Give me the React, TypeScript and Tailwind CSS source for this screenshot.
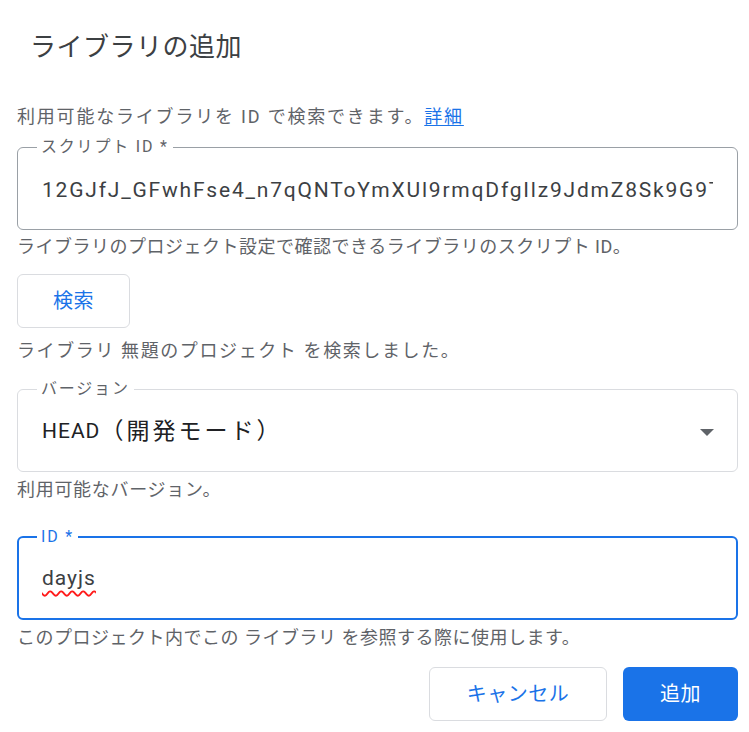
import React from "react";

const font = "font-['Roboto','Noto_Sans_CJK_JP',sans-serif]";

function Field({
  label,
  tone,
  children,
}: {
  label: string;
  tone: "dark" | "light" | "focused";
  children: React.ReactNode;
}) {
  const box =
    tone === "focused"
      ? "border-2 border-[#1a73e8] px-[23px]"
      : tone === "dark"
        ? "border border-[#9aa0a6] px-[24px]"
        : "border border-[#dadce0] px-[24px]";
  return (
    <fieldset className={`rounded-[6px] ${box}`}>
      <legend
        className={
          "ml-[-5px] px-[4px] text-[16px] leading-[18px] tracking-[1.8px] " +
          (tone === "focused" ? "text-[#1a73e8]" : "text-[#5f6368]")
        }
      >
        {label}
      </legend>
      {children}
    </fieldset>
  );
}

export default function App() {
  return (
    <div className={`${font} min-h-[732px] w-[749px] bg-white pl-[17px] pr-[11px] pt-[31px]`}>
      <h1 className="ml-[13px] text-[26px] leading-[32px] tracking-[0.5px] text-[#3c4043]">ライブラリの追加</h1>

      <p className="mt-[42px] text-[18px] leading-[24px] tracking-[1.8px] text-[#5f6368]">
        利用可能なライブラリを ID で検索できます。
        <a href="#" className="text-[#1a73e8] underline underline-offset-2">
          詳細
        </a>
      </p>

      <div className="mt-[9px]">
        <Field label="スクリプト ID *" tone="dark">
          <div className="h-[73px] pt-[14px]">
            <input
              readOnly
              value="12GJfJ_GFwhFse4_n7qQNToYmXUl9rmqDfgIlz9JdmZ8Sk9G9TLM0Rz5sT1d7Wq"
              className="h-[40px] w-full bg-transparent text-[21px] tracking-[1.8px] text-[#3c4043] outline-none"
            />
          </div>
        </Field>
      </div>
      <p className="mt-[5px] text-[18px] leading-[24px] tracking-[0.5px] text-[#5f6368]">
        ライブラリのプロジェクト設定で確認できるライブラリのスクリプト ID。
      </p>

      <button className="mt-[15px] h-[54px] w-[113px] rounded-[6px] border border-[#dadce0] text-[20px] tracking-[0.5px] text-[#1a73e8]">
        検索
      </button>
      <p className="mt-[11px] text-[18px] leading-[24px] tracking-[1.6px] text-[#5f6368]">
        ライブラリ 無題のプロジェクト を検索しました。
      </p>

      <div className="mt-[17px]">
        <Field label="バージョン" tone="light">
          <div className="flex h-[73px] items-start justify-between pt-[14px]">
            <span className="flex h-[40px] items-center text-[21px] tracking-[1px] text-[#202124]">
              HEAD
              <span className="text-[23px] tracking-[3px]">（開発モード）</span>
            </span>
            <svg width="14" height="7" viewBox="0 0 14 7" className="mr-[-1px] mt-[17px]">
              <path d="M0 0h14L7 7z" fill="#5f6368" />
            </svg>
          </div>
        </Field>
      </div>
      <p className="mt-[6px] text-[18px] leading-[24px] tracking-[0.7px] text-[#5f6368]">
        利用可能なバージョン。
      </p>

      <div className="mt-[26px]">
        <Field label="ID *" tone="focused">
          <div className="h-[72px] pt-[13px]">
            <div className="flex h-[40px] items-center text-[21px] tracking-[1px] text-[#3c4043]">
              <span className="underline decoration-[#ff1a1a] decoration-wavy decoration-[1.5px] underline-offset-[5px]">
                dayjs
              </span>
            </div>
          </div>
        </Field>
      </div>
      <p className="mt-[6px] text-[18px] leading-[24px] tracking-[0.5px] text-[#5f6368]">
        このプロジェクト内でこの ライブラリ を参照する際に使用します。
      </p>

      <div className="mt-[17px] flex justify-end gap-[16px]">
        <button className="h-[54px] w-[178px] rounded-[6px] border border-[#dadce0] text-[20px] tracking-[0.5px] text-[#1a73e8]">
          キャンセル
        </button>
        <button className="h-[54px] w-[115px] rounded-[6px] bg-[#1a73e8] text-[20px] tracking-[0.5px] text-white">
          追加
        </button>
      </div>
    </div>
  );
}
